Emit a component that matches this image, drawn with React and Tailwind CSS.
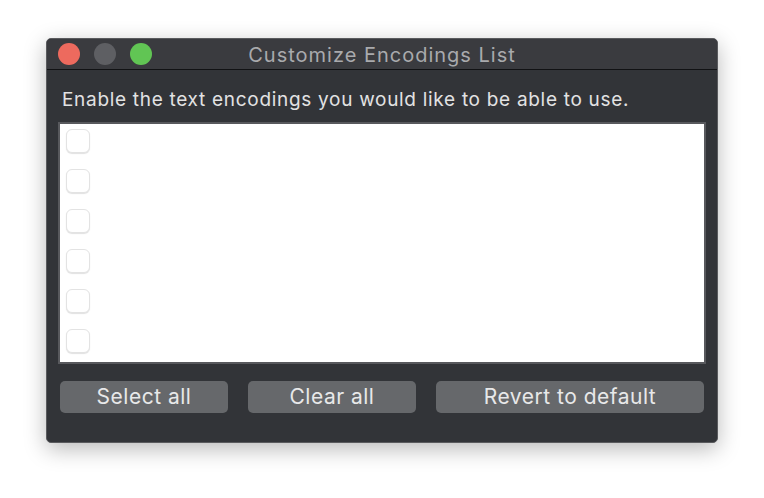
import React from "react";

export default function App() {
  const rows = [0, 1, 2, 3, 4, 5];
  return (
    <div className="w-[764px] h-[498px] bg-white pt-[38px] pl-[46px]" style={{ fontFamily: "Inter, 'Noto Sans', sans-serif" }}>
      <div className="w-[672px] h-[405px] rounded-[5px] bg-[#323438] border border-[#5a5b5e] shadow-[0_6px_22px_rgba(0,0,0,0.28)] flex flex-col overflow-hidden">
        <div className="relative h-[31px] bg-[#3a3b3f] border-b border-[#111214] flex items-center shrink-0">
          <div className="flex items-center gap-[14px] pl-[11px]">
            <div className="w-[22px] h-[22px] rounded-full bg-[#ed6a5e]" />
            <div className="w-[22px] h-[22px] rounded-full bg-[#5e5f63]" />
            <div className="w-[22px] h-[22px] rounded-full bg-[#61c554]" />
          </div>
          <div className="absolute inset-0 flex items-center justify-center text-[20px] tracking-[1px] text-[#a9aaad] pt-[1px]">
            Customize Encodings List
          </div>
        </div>
        <div className="flex flex-col px-[11px]">
          <div className="text-[19px] tracking-[0.7px] text-[#e2e2e3] pl-[4px] pt-[19px] h-[52px] leading-[22px]">
            Enable the text encodings you would like to be able to use.
          </div>
          <div className="h-[242px] border-2 border-[#58595d] bg-white flex flex-col pt-[5px] pl-[6px] gap-[16px]">
            {rows.map((i) => (
              <div key={i} className="w-[24px] h-[24px] rounded-[6px] bg-white border border-[#e3e3e3] shadow-[0_1px_1px_rgba(0,0,0,0.12)]" />
            ))}
          </div>
          <div className="flex gap-[20px] pt-[17px] pl-[2px]">
            <button className="w-[168px] h-[32px] rounded-[5px] bg-[#66686b] text-[21px] tracking-[0.5px] text-[#e8e8e9] leading-[32px]">Select all</button>
            <button className="w-[168px] h-[32px] rounded-[5px] bg-[#66686b] text-[21px] tracking-[0.5px] text-[#e8e8e9] leading-[32px]">Clear all</button>
            <button className="w-[268px] h-[32px] rounded-[5px] bg-[#66686b] text-[21px] tracking-[0.5px] text-[#e8e8e9] leading-[32px]">Revert to default</button>
          </div>
        </div>
      </div>
    </div>
  );
}
